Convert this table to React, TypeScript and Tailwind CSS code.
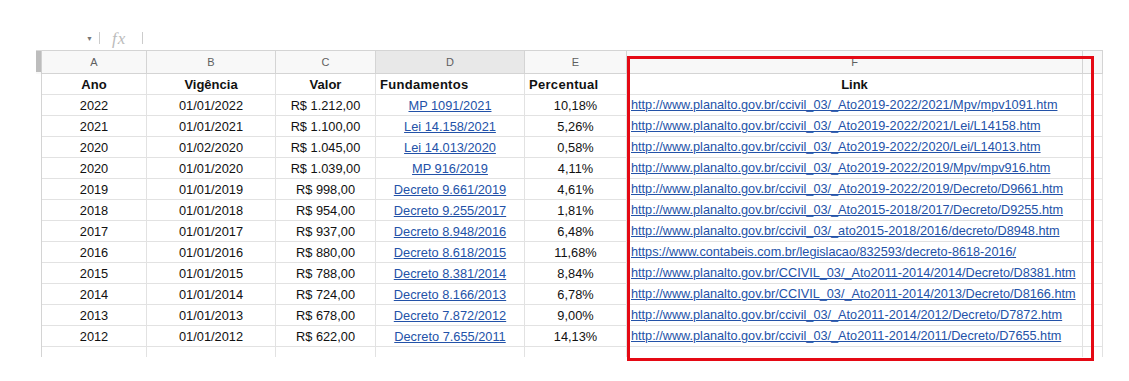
import React from "react";

const rows: [string, string, string, string, string, string][] = [
  ["2022", "01/01/2022", "R$ 1.212,00", "MP 1091/2021", "10,18%", "http://www.planalto.gov.br/ccivil_03/_Ato2019-2022/2021/Mpv/mpv1091.htm"],
  ["2021", "01/01/2021", "R$ 1.100,00", "Lei 14.158/2021", "5,26%", "http://www.planalto.gov.br/ccivil_03/_Ato2019-2022/2021/Lei/L14158.htm"],
  ["2020", "01/02/2020", "R$ 1.045,00", "Lei 14.013/2020", "0,58%", "http://www.planalto.gov.br/ccivil_03/_Ato2019-2022/2020/Lei/L14013.htm"],
  ["2020", "01/01/2020", "R$ 1.039,00", "MP 916/2019", "4,11%", "http://www.planalto.gov.br/ccivil_03/_Ato2019-2022/2019/Mpv/mpv916.htm"],
  ["2019", "01/01/2019", "R$ 998,00", "Decreto 9.661/2019", "4,61%", "http://www.planalto.gov.br/ccivil_03/_Ato2019-2022/2019/Decreto/D9661.htm"],
  ["2018", "01/01/2018", "R$ 954,00", "Decreto 9.255/2017", "1,81%", "http://www.planalto.gov.br/ccivil_03/_Ato2015-2018/2017/Decreto/D9255.htm"],
  ["2017", "01/01/2017", "R$ 937,00", "Decreto 8.948/2016", "6,48%", "http://www.planalto.gov.br/ccivil_03/_ato2015-2018/2016/decreto/D8948.htm"],
  ["2016", "01/01/2016", "R$ 880,00", "Decreto 8.618/2015", "11,68%", "https://www.contabeis.com.br/legislacao/832593/decreto-8618-2016/"],
  ["2015", "01/01/2015", "R$ 788,00", "Decreto 8.381/2014", "8,84%", "http://www.planalto.gov.br/CCIVIL_03/_Ato2011-2014/2014/Decreto/D8381.htm"],
  ["2014", "01/01/2014", "R$ 724,00", "Decreto 8.166/2013", "6,78%", "http://www.planalto.gov.br/CCIVIL_03/_Ato2011-2014/2013/Decreto/D8166.htm"],
  ["2013", "01/01/2013", "R$ 678,00", "Decreto 7.872/2012", "9,00%", "http://www.planalto.gov.br/ccivil_03/_Ato2011-2014/2012/Decreto/D7872.htm"],
  ["2012", "01/01/2012", "R$ 622,00", "Decreto 7.655/2011", "14,13%", "http://www.planalto.gov.br/ccivil_03/_Ato2011-2014/2011/Decreto/D7655.htm"],
];

const cols = "grid grid-cols-[6px_105px_129px_100px_149px_102px_456px_20px]";
const cell = "h-[21px] pt-[2px] border-r border-b border-[#e2e2e2] flex items-center whitespace-nowrap overflow-hidden";
const link = "text-[#2352a8] underline decoration-[#2352a8]";

export default function App() {
  return (
    <div className="relative w-[1129px] h-[381px] bg-white text-[12.8px] text-[#111] overflow-hidden" style={{ fontFamily: '"Liberation Sans", Arial, sans-serif' }}>
      {/* formula bar */}
      <div className="h-[50px] pl-[86px] pt-[31px] flex items-start">
        <div className="flex items-center h-[14px]">
          <span className="text-[7px] text-[#777] leading-none">▼</span>
          <span className="ml-[6px] w-px h-[12px] bg-[#ccc]" />
          <span className="ml-[12px] text-[17px] italic text-[#bbb] leading-none tracking-[1px]" style={{ fontFamily: '"Liberation Serif", serif' }}>fx</span>
          <span className="ml-[16px] w-px h-[12px] bg-[#ccc]" />
        </div>
      </div>
      {/* grid */}
      <div className={`ml-[36px] ${cols} w-[1067px]`}>
        {/* header row */}
        <div className="h-[24px] border-t border-[#d8d8d8] bg-[#f8f8f8] flex">
          <div className="w-[5px] h-[21px] bg-[#bdbdbd]" />
          <div className="w-px bg-[#d0d0d0]" />
        </div>
        {["A", "B", "C", "D", "E", "F", ""].map((l, i) => (
          <div
            key={i}
            className={`h-[24px] pt-px border-t border-b border-r border-[#d4d4d4] flex items-center justify-center text-[11px] text-[#5f5f5f] ${l === "D" ? "bg-[#e8e8e8]" : "bg-[#f8f8f8]"}`}
          >
            {l}
          </div>
        ))}
        {/* title row */}
        <div className={`${cell} border-b-0 border-r-[#d4d4d4]`} />
        <div className={`${cell} justify-center font-bold text-[13px]`}>Ano</div>
        <div className={`${cell} justify-center font-bold text-[13px]`}>Vigência</div>
        <div className={`${cell} justify-center font-bold text-[13px]`}>Valor</div>
        <div className={`${cell} pl-[4px] font-bold text-[13px] tracking-[0.3px]`}>Fundamentos</div>
        <div className={`${cell} pl-[4px] font-bold text-[13px] tracking-[0.3px]`}>Percentual</div>
        <div className={`${cell} justify-center font-bold text-[13px]`}>Link</div>
        <div className={`${cell}`} />
        {rows.map((r, i) => (
          <React.Fragment key={i}>
            <div className={`${cell} border-b-0 border-r-[#d4d4d4]`} />
            <div className={`${cell} justify-center`}>{r[0]}</div>
            <div className={`${cell} justify-center`}>{r[1]}</div>
            <div className={`${cell} justify-center`}>{r[2]}</div>
            <div className={`${cell} justify-center`}>
              <span className={link}>{r[3]}</span>
            </div>
            <div className={`${cell} justify-center`}>{r[4]}</div>
            <div className={`${cell} pl-[4px]`}>
              <span className={`${link} text-[12.7px]`}>{r[5]}</span>
            </div>
            <div className={`${cell}`} />
          </React.Fragment>
        ))}
        {/* partial row */}
        {Array.from({ length: 8 }).map((_, i) => (
          <div key={i} className={`h-[10px] border-r ${i === 0 ? "border-[#d4d4d4]" : "border-[#e2e2e2]"}`} />
        ))}
      </div>
      {/* red highlight box */}
      <div className="absolute left-[627px] top-[56px] w-[467px] h-[305px] border-[3px] border-[#e50914]" />
    </div>
  );
}
